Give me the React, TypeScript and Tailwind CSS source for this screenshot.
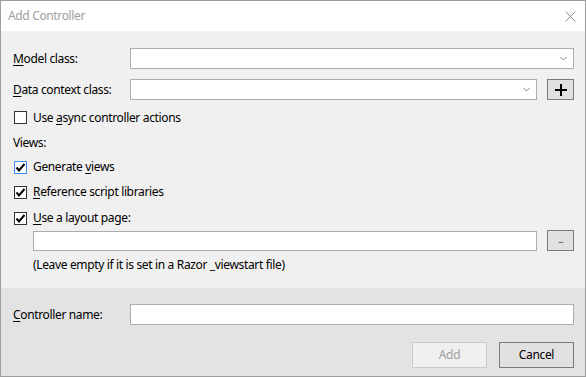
import React from "react";

const Check = () => (
  <svg width="11" height="11" viewBox="0 0 11 11" className="block">
    <path d="M1.5 5.5 L4 8.5 L9.5 2" fill="none" stroke="#000" strokeWidth="2" />
  </svg>
);

function CheckBox({ checked, focus }: { checked?: boolean; focus?: boolean }) {
  return (
    <div
      className={
        "w-[13px] h-[13px] bg-white border flex items-center justify-center " +
        (focus ? "border-[#3c8ff0]" : "border-[#333333]")
      }
    >
      {checked ? <Check /> : null}
    </div>
  );
}

const Chevron = () => (
  <svg width="7" height="5" viewBox="0 0 7 5" className="block">
    <path d="M0.5 1 L3.5 4 L6.5 1" fill="none" stroke="#888" strokeWidth="1" />
  </svg>
);

function Combo({ className }: { className?: string }) {
  return (
    <div
      className={
        "h-[21px] bg-white border border-[#acacac] flex items-center justify-end pr-[6px] " +
        (className || "")
      }
    >
      <Chevron />
    </div>
  );
}

function U({ children }: { children: React.ReactNode }) {
  return <span className="underline underline-offset-[2px] decoration-1">{children}</span>;
}

export default function App() {
  return (
    <div
      className="w-[586px] h-[377px] bg-[#3b4656] text-[12px] text-black tracking-[-0.35px]"
      style={{ fontFamily: '"Noto Sans", "Open Sans", sans-serif' }}
    >
      <div className="w-[586px] h-[377px] flex flex-col border border-[#9d9d9d]">
        {/* Title bar */}
        <div className="h-[30px] bg-white flex items-center justify-between pl-[7px] pr-[9px]">
          <span className="text-[#a0a0a0] text-[12px] leading-none">Add Controller</span>
          <svg width="11" height="11" viewBox="0 0 11 11" className="block">
            <path d="M0.5 0.5 L10.5 10.5 M10.5 0.5 L0.5 10.5" stroke="#8a8a8a" strokeWidth="1" />
          </svg>
        </div>

        {/* Main */}
        <div className="flex-1 bg-[#f0f0f0] flex flex-col pl-[12px] pr-[11px] pt-[17px]">
          <div className="h-[21px] flex items-center">
            <div className="w-[117px] leading-none">
              <U>M</U>odel class:
            </div>
            <Combo className="flex-1" />
          </div>
          <div className="h-[21px] flex items-center mt-[10px]">
            <div className="w-[117px] leading-none">
              <U>D</U>ata context class:
            </div>
            <Combo className="flex-1" />
            <div className="ml-[10px] w-[27px] h-[21px] bg-[#e1e1e1] border border-[#7a7a7a] flex items-center justify-center">
              <svg width="12" height="12" viewBox="0 0 12 12" className="block">
                <path d="M6 0 V12 M0 6 H12" stroke="#000" strokeWidth="2" />
              </svg>
            </div>
          </div>
          <div className="h-[21px] flex items-center mt-[7px] pl-[1px] gap-[6px]">
            <CheckBox />
            <span className="leading-none">
              Use <U>a</U>sync controller actions
            </span>
          </div>
          <div className="h-[20px] flex items-center mt-[5px] leading-none">Views:</div>
          <div className="h-[20px] flex items-center mt-[4px] pl-[1px] gap-[6px]">
            <CheckBox checked focus />
            <span className="leading-none">
              Generate <U>v</U>iews
            </span>
          </div>
          <div className="h-[20px] flex items-center mt-[5px] pl-[1px] gap-[6px]">
            <CheckBox checked />
            <span className="leading-none">
              <U>R</U>eference script libraries
            </span>
          </div>
          <div className="h-[20px] flex items-center mt-[6px] pl-[1px] gap-[6px]">
            <CheckBox checked />
            <span className="leading-none">
              <U>U</U>se a layout page:
            </span>
          </div>
          <div className="h-[21px] flex items-center mt-[2px] pl-[20px]">
            <div className="flex-1 h-[20px] bg-white border border-[#acacac]" />
            <div className="ml-[10px] w-[27px] h-[21px] bg-[#e1e1e1] border border-[#7a7a7a] flex items-end justify-center pb-[6px]">
              <span className="text-[8px] leading-none tracking-[-0.5px]">...</span>
            </div>
          </div>
          <div className="h-[20px] flex items-center mt-[4px] pl-[20px] leading-none">
            (Leave empty if it is set in a Razor _viewstart file)
          </div>
        </div>

        {/* Footer */}
        <div className="h-[88px] bg-[#e3e3e3] flex flex-col pl-[12px] pr-[11px] pt-[16px]">
          <div className="h-[21px] flex items-center">
            <div className="w-[117px] leading-none">
              <U>C</U>ontroller name:
            </div>
            <div className="flex-1 h-[21px] bg-white border border-[#acacac]" />
          </div>
          <div className="flex justify-end gap-[12px] mt-[17px]">
            <div className="w-[75px] h-[26px] bg-[#f0f0f0] border border-[#cccccc] text-[#a0a0a0] flex items-center justify-center leading-none">
              Add
            </div>
            <div className="w-[75px] h-[26px] bg-[#e1e1e1] border border-[#7a7a7a] flex items-center justify-center leading-none">
              Cancel
            </div>
          </div>
        </div>
      </div>
    </div>
  );
}
